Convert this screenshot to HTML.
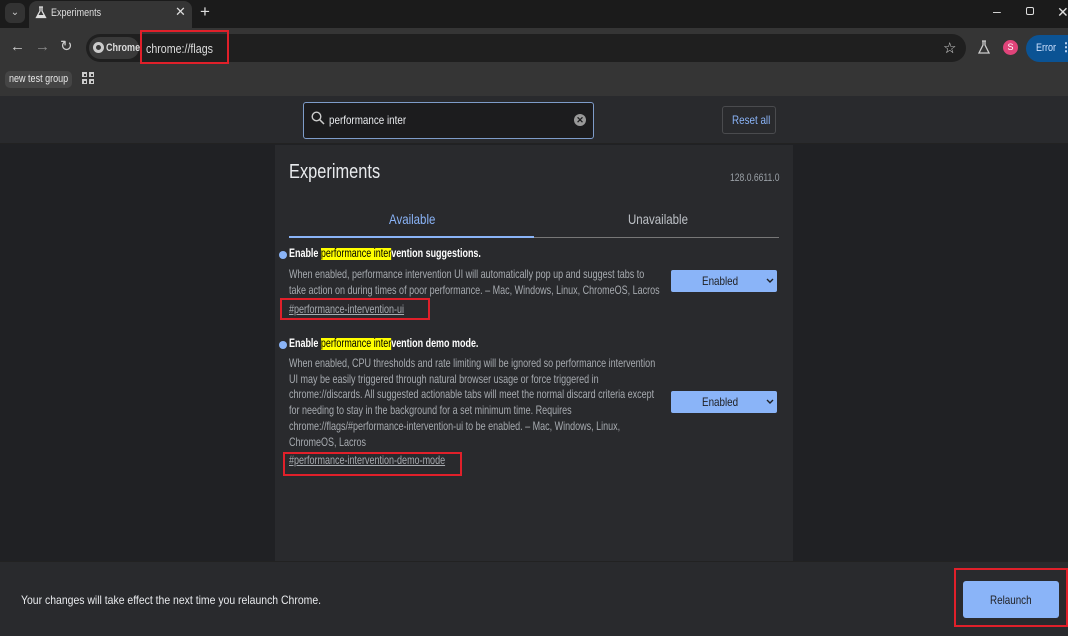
<!DOCTYPE html>
<html><head><meta charset="utf-8"><style>
*{margin:0;padding:0;box-sizing:border-box}
body{width:1068px;height:636px;overflow:hidden;background:#202124;font-family:"Liberation Sans",sans-serif;color:#e8eaed;position:relative}
.a{position:absolute}
.n{white-space:nowrap;transform:scaleX(0.82);transform-origin:left center;display:block}
.d .n{transform:scaleX(0.75)}
.h{transform:scaleX(0.78)!important}
.red{position:absolute;border:2px solid #e0202a}
</style></head><body>
<!-- tab strip -->
<div class="a" style="left:0;top:0;width:1068px;height:28px;background:#1b1b1b"></div>
<div class="a" style="left:5px;top:3px;width:20px;height:20px;background:#333;border-radius:6px;color:#ccc;font-size:10px;text-align:center;line-height:20px">⌄</div>
<div class="a" style="left:29px;top:1px;width:163px;height:27px;background:#353535;border-radius:8px 8px 0 0"></div>
<svg class="a" style="left:35px;top:6px" width="12" height="13" viewBox="0 0 12 13"><path d="M4 1h4M5 1v4L1.5 11.5h9L7 5V1" fill="none" stroke="#ddd" stroke-width="1.3"/><path d="M3 9h6l1.5 2.5h-9z" fill="#ddd"/></svg>
<div class="a" style="left:51px;top:7px;font-size:11px;color:#ddd"><span class="n">Experiments</span></div>
<div class="a" style="left:175px;top:4px;font-size:13px;color:#ddd">✕</div>
<div class="a" style="left:200px;top:2px;font-size:17px;color:#ddd">+</div>
<div class="a" style="left:993px;top:3px;font-size:14px;color:#ddd">–</div>
<div class="a" style="left:1026px;top:7px;width:8px;height:8px;border:1.5px solid #ddd;border-radius:2px"></div>
<div class="a" style="left:1057px;top:4px;font-size:14px;color:#ddd">✕</div>
<!-- toolbar -->
<div class="a" style="left:0;top:28px;width:1068px;height:38px;background:#353535"></div>
<div class="a" style="left:10px;top:38px;font-size:15px;color:#ccc">←</div>
<div class="a" style="left:35px;top:38px;font-size:15px;color:#888">→</div>
<div class="a" style="left:60px;top:37px;font-size:15px;color:#ccc">↻</div>
<div class="a" style="left:86px;top:34px;width:880px;height:28px;background:#1f1f1f;border-radius:14px"></div>
<div class="a" style="left:89px;top:37px;width:50px;height:22px;background:#3a3a3a;border-radius:11px"></div>
<div class="a" style="left:93px;top:42px;width:11px;height:11px;border:3px solid #ccc;border-radius:50%"></div>
<div class="a" style="left:106px;top:42px;font-size:11px;font-weight:bold;color:#ddd"><span class="n">Chrome</span></div>
<div class="a" style="left:146px;top:41px;font-size:13px;color:#ddd"><span class="n">chrome://flags</span></div>
<div class="red" style="left:140px;top:30px;width:89px;height:34px"></div>
<div class="a" style="left:943px;top:39px;font-size:15px;color:#ddd">☆</div>
<svg class="a" style="left:978px;top:40px" width="12" height="14" viewBox="0 0 12 14"><path d="M4 1h4M5 1v4L1 13h10L7 5V1" fill="none" stroke="#ccc" stroke-width="1.3"/></svg>
<div class="a" style="left:1003px;top:40px;width:15px;height:15px;border-radius:50%;background:#e0447a;font-size:9px;text-align:center;line-height:15px;color:#fff">S</div>
<div class="a" style="left:1026px;top:35px;width:50px;height:27px;background:#0b5394;border-radius:14px 0 0 14px"></div>
<div class="a" style="left:1036px;top:42px;font-size:11px;color:#cfe2ff"><span class="n">Error</span></div>
<div class="a" style="left:1060px;top:40px;font-size:12px;color:#cfe2ff;font-weight:bold">⋮</div>
<!-- bookmarks -->
<div class="a" style="left:0;top:66px;width:1068px;height:30px;background:#353535"></div>
<div class="a" style="left:5px;top:71px;width:67px;height:17px;background:#454545;border-radius:5px"></div>
<div class="a" style="left:9px;top:73px;font-size:11px;color:#e8e8e8"><span class="n">new test group</span></div>
<div class="a" style="left:82px;top:72px;width:12px;height:12px;background:
linear-gradient(#ccc,#ccc) 0 0/5px 5px no-repeat,linear-gradient(#ccc,#ccc) 7px 0/5px 5px no-repeat,linear-gradient(#ccc,#ccc) 0 7px/5px 5px no-repeat,linear-gradient(#ccc,#ccc) 7px 7px/5px 5px no-repeat"></div>
<div class="a" style="left:83.5px;top:73.5px;width:2px;height:2px;background:#353535;box-shadow:7px 0 #353535,0 7px #353535,7px 7px #353535"></div>
<!-- page header -->
<div class="a" style="left:0;top:96px;width:1068px;height:48px;background:#292a2d;border-bottom:1px solid #222"></div>
<div class="a" style="left:303px;top:102px;width:291px;height:37px;background:#1c1c1e;border:1.5px solid #7e9cc9;border-radius:3px"></div>
<svg class="a" style="left:311px;top:111px" width="14" height="14" viewBox="0 0 14 14"><circle cx="5.5" cy="5.5" r="4.3" fill="none" stroke="#ccc" stroke-width="1.4"/><path d="M8.7 8.7L13 13" stroke="#ccc" stroke-width="1.5"/></svg>
<div class="a" style="left:329px;top:113px;font-size:12px;color:#e8eaed"><span class="n">performance inter</span></div>
<div class="a" style="left:574px;top:114px;width:12px;height:12px;border-radius:50%;background:#999;color:#1c1c1e;font-size:9px;line-height:12px;text-align:center;font-weight:bold">✕</div>
<div class="a" style="left:722px;top:106px;width:54px;height:28px;border:1px solid #4a4b4e;border-radius:3px"></div>
<div class="a" style="left:732px;top:113px;font-size:12px;color:#8ab4f8"><span class="n">Reset all</span></div>
<!-- center column -->
<div class="a" style="left:275px;top:145px;width:518px;height:416px;background:#292a2d"></div>
<div class="a" style="left:289px;top:161px;font-size:20px;color:#e8eaed"><span class="n">Experiments</span></div>
<div class="a" style="left:730px;top:172px;font-size:11px;color:#9aa0a6"><span class="n" style="transform:scaleX(0.78)">128.0.6611.0</span></div>
<div class="a" style="left:389px;top:211px;font-size:14px;color:#8ab4f8"><span class="n">Available</span></div>
<div class="a" style="left:628px;top:211px;font-size:14px;color:#bdc1c6"><span class="n">Unavailable</span></div>
<div class="a" style="left:289px;top:237px;width:490px;height:1px;background:#777"></div>
<div class="a" style="left:289px;top:236px;width:245px;height:2px;background:#8ab4f8"></div>
<!-- flag 1 -->
<div class="a" style="left:279px;top:251px;width:8px;height:8px;border-radius:50%;background:#8ab4f8"></div>
<div class="a" style="left:289px;top:248px;font-size:11.5px;font-weight:bold;color:#fff"><span class="n h">Enable <span style="background:#ffff00;color:#000;font-weight:normal">performance inter</span>vention suggestions.</span></div>
<div class="a d" style="left:289px;top:266px;font-size:12px;line-height:16px;color:#a7abb0">
<span class="n">When enabled, performance intervention UI will automatically pop up and suggest tabs to</span>
<span class="n">take action on during times of poor performance. – Mac, Windows, Linux, ChromeOS, Lacros</span>
<span class="n" style="text-decoration:underline;margin-top:3px">#performance-intervention-ui</span></div>
<div class="red" style="left:280px;top:298px;width:150px;height:22px"></div>
<div class="a" style="left:671px;top:270px;width:106px;height:22px;background:#8ab4f8;border-radius:2px"></div>
<div class="a" style="left:702px;top:274px;font-size:12px;color:#202124"><span class="n">Enabled</span></div>
<svg class="a" style="left:766px;top:278px" width="8" height="6" viewBox="0 0 8 6"><path d="M1 1l3 3 3-3" fill="none" stroke="#202124" stroke-width="1.4"/></svg>
<!-- flag 2 -->
<div class="a" style="left:279px;top:341px;width:8px;height:8px;border-radius:50%;background:#8ab4f8"></div>
<div class="a" style="left:289px;top:338px;font-size:11.5px;font-weight:bold;color:#fff"><span class="n h">Enable <span style="background:#ffff00;color:#000;font-weight:normal">performance inter</span>vention demo mode.</span></div>
<div class="a d" style="left:289px;top:356px;font-size:12px;line-height:15.7px;color:#a7abb0">
<span class="n">When enabled, CPU thresholds and rate limiting will be ignored so performance intervention</span>
<span class="n">UI may be easily triggered through natural browser usage or force triggered in</span>
<span class="n">chrome://discards. All suggested actionable tabs will meet the normal discard criteria except</span>
<span class="n">for needing to stay in the background for a set minimum time. Requires</span>
<span class="n">chrome://flags/#performance-intervention-ui to be enabled. – Mac, Windows, Linux,</span>
<span class="n">ChromeOS, Lacros</span>
<span class="n" style="text-decoration:underline;margin-top:3px">#performance-intervention-demo-mode</span></div>
<div class="red" style="left:283px;top:452px;width:179px;height:24px"></div>
<div class="a" style="left:671px;top:391px;width:106px;height:22px;background:#8ab4f8;border-radius:2px"></div>
<div class="a" style="left:702px;top:395px;font-size:12px;color:#202124"><span class="n">Enabled</span></div>
<svg class="a" style="left:766px;top:399px" width="8" height="6" viewBox="0 0 8 6"><path d="M1 1l3 3 3-3" fill="none" stroke="#202124" stroke-width="1.4"/></svg>
<!-- bottom bar -->
<div class="a" style="left:0;top:561px;width:1068px;height:75px;background:#292a2d;border-top:1px solid #222"></div>
<div class="a" style="left:21px;top:593px;font-size:12px;color:#e8eaed"><span class="n" style="transform:scaleX(0.87)">Your changes will take effect the next time you relaunch Chrome.</span></div>
<div class="a" style="left:963px;top:581px;width:96px;height:37px;background:#8ab4f8;border-radius:3px"></div>
<div class="a" style="left:990px;top:593px;font-size:12px;color:#202124"><span class="n">Relaunch</span></div>
<div class="red" style="left:954px;top:568px;width:114px;height:59px"></div>
</body></html>
